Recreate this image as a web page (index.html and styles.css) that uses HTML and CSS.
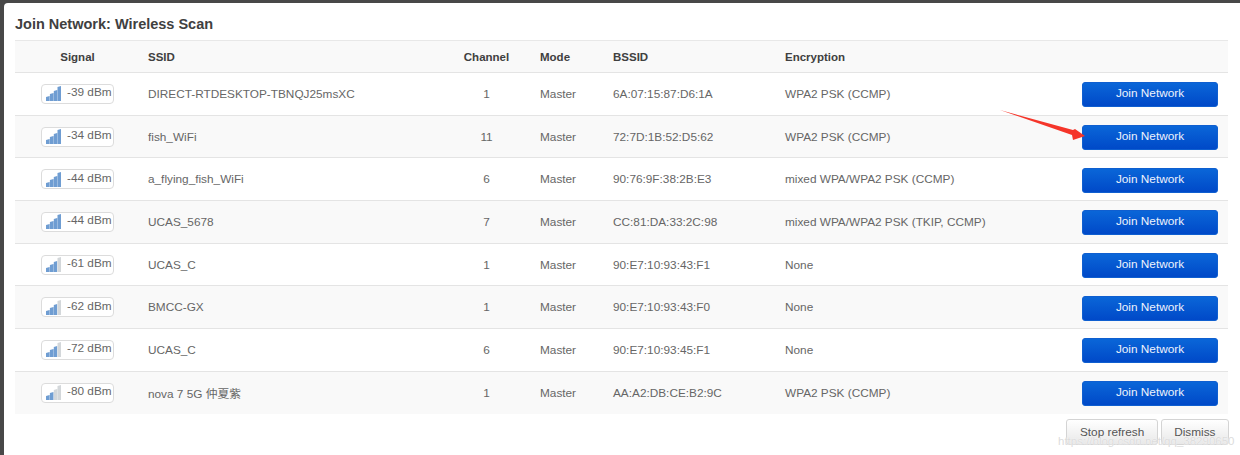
FILE: index.html
```html
<!DOCTYPE html>
<html lang="en">
<head>
    <meta charset="UTF-8">
    <title>Join Network: Wireless Scan</title>
    <link rel="stylesheet" href="styles.css">
</head>
<body>
    <svg width="0" height="0" class="defs">
        <symbol id="sig-4" viewBox="0 0 15 15">
            <path fill="#6f9dd2" d="M0 15v-4l3.600-1V15zM3.900 15V8l3.600-1V15zM7.800 15V5l3.400-1v11zM11.500 15V1L15 0v15z"/>
        </symbol>
        <symbol id="sig-3" viewBox="0 0 15 15">
            <path fill="#6f9dd2" d="M0 15v-4l3.600-1V15zM3.900 15V8l3.600-1V15zM7.800 15V5l3.400-1v11z"/>
            <path fill="#d3d7da" d="M11.500 15V1L15 0v15z"/>
        </symbol>
        <symbol id="sig-2" viewBox="0 0 15 15">
            <path fill="#6f9dd2" d="M0 15v-4l3.600-1V15zM3.900 15V8l3.600-1V15z"/>
            <path fill="#d3d7da" d="M7.800 15V5l3.400-1v11zM11.500 15V1L15 0v15z"/>
        </symbol>
    </svg>
    <div class="modal">
        <h2>Join Network: Wireless Scan</h2>
        <table class="scan">
            <thead>
                <tr>
                    <th class="col-signal center">Signal</th>
                    <th class="col-ssid">SSID</th>
                    <th class="col-channel center">Channel</th>
                    <th class="col-mode">Mode</th>
                    <th class="col-bssid">BSSID</th>
                    <th class="col-enc">Encryption</th>
                    <th class="col-action"></th>
                </tr>
            </thead>
            <tbody>
                <tr>
                    <td class="center"><span class="badge"><svg class="sig"><use href="#sig-4"/></svg>-39 dBm</span></td>
                    <td>DIRECT-RTDESKTOP-TBNQJ25msXC</td>
                    <td class="center">1</td>
                    <td>Master</td>
                    <td>6A:07:15:87:D6:1A</td>
                    <td>WPA2 PSK (CCMP)</td>
                    <td><button class="btn-join">Join Network</button></td>
                </tr>
                <tr>
                    <td class="center"><span class="badge"><svg class="sig"><use href="#sig-4"/></svg>-34 dBm</span></td>
                    <td>fish_WiFi</td>
                    <td class="center">11</td>
                    <td>Master</td>
                    <td>72:7D:1B:52:D5:62</td>
                    <td>WPA2 PSK (CCMP)</td>
                    <td><button class="btn-join">Join Network</button></td>
                </tr>
                <tr>
                    <td class="center"><span class="badge"><svg class="sig"><use href="#sig-4"/></svg>-44 dBm</span></td>
                    <td>a_flying_fish_WiFi</td>
                    <td class="center">6</td>
                    <td>Master</td>
                    <td>90:76:9F:38:2B:E3</td>
                    <td>mixed WPA/WPA2 PSK (CCMP)</td>
                    <td><button class="btn-join">Join Network</button></td>
                </tr>
                <tr>
                    <td class="center"><span class="badge"><svg class="sig"><use href="#sig-4"/></svg>-44 dBm</span></td>
                    <td>UCAS_5678</td>
                    <td class="center">7</td>
                    <td>Master</td>
                    <td>CC:81:DA:33:2C:98</td>
                    <td>mixed WPA/WPA2 PSK (TKIP, CCMP)</td>
                    <td><button class="btn-join">Join Network</button></td>
                </tr>
                <tr>
                    <td class="center"><span class="badge"><svg class="sig"><use href="#sig-3"/></svg>-61 dBm</span></td>
                    <td>UCAS_C</td>
                    <td class="center">1</td>
                    <td>Master</td>
                    <td>90:E7:10:93:43:F1</td>
                    <td>None</td>
                    <td><button class="btn-join">Join Network</button></td>
                </tr>
                <tr>
                    <td class="center"><span class="badge"><svg class="sig"><use href="#sig-3"/></svg>-62 dBm</span></td>
                    <td>BMCC-GX</td>
                    <td class="center">1</td>
                    <td>Master</td>
                    <td>90:E7:10:93:43:F0</td>
                    <td>None</td>
                    <td><button class="btn-join">Join Network</button></td>
                </tr>
                <tr>
                    <td class="center"><span class="badge"><svg class="sig"><use href="#sig-3"/></svg>-72 dBm</span></td>
                    <td>UCAS_C</td>
                    <td class="center">6</td>
                    <td>Master</td>
                    <td>90:E7:10:93:45:F1</td>
                    <td>None</td>
                    <td><button class="btn-join">Join Network</button></td>
                </tr>
                <tr>
                    <td class="center"><span class="badge"><svg class="sig"><use href="#sig-2"/></svg>-80 dBm</span></td>
                    <td>nova 7 5G 仲夏紫</td>
                    <td class="center">1</td>
                    <td>Master</td>
                    <td>AA:A2:DB:CE:B2:9C</td>
                    <td>WPA2 PSK (CCMP)</td>
                    <td><button class="btn-join">Join Network</button></td>
                </tr>
            </tbody>
        </table>
        <div class="actions">
            <button class="btn">Stop refresh</button>
            <button class="btn">Dismiss</button>
        </div>
    </div>
    <svg class="arrow" width="90" height="36" viewBox="0 0 90 36">
        <path fill="#f5352a" d="M0 0L73 20L75 19L85 26L73 30L72 25z"/>
    </svg>
    <div class="watermark">https://blog.csdn.net/qq_38290650</div>
</body>
</html>
```

FILE: styles.css
```css
html, body {
    height: 100%;
}
body {
    margin: 0;
    padding: 3px 0 0 4px;
    box-sizing: border-box;
    overflow: hidden;
    background: #484848;
    font-family: "Liberation Sans", "Noto Sans CJK SC", sans-serif;
    font-size: 11.800px;
    color: #666;
}
.defs {
    position: absolute;
}
.modal {
    height: 100%;
    box-sizing: border-box;
    padding: 0 12px 0 11px;
    background: #fff;
    border-radius: 4px 0 0 0;
}
h2 {
    margin: 0;
    padding-top: 13px;
    height: 37px;
    box-sizing: border-box;
    font-size: 14.500px;
    line-height: 16px;
    color: #404040;
}
.scan {
    width: 1213px;
    table-layout: fixed;
    border-collapse: collapse;
}
.scan th {
    height: 32px;
    padding: 0 8px;
    box-sizing: border-box;
    text-align: left;
    font-size: 11.500px;
    color: #404040;
    background: #f9f9f9;
    border-top: 1px solid #e8e8e8;
}
.scan td {
    height: 42.700px;
    padding: 0 8px;
    box-sizing: border-box;
    border-top: 1px solid #e4e4e4;
    white-space: nowrap;
}
.scan tbody tr:nth-child(even) td {
    background: #f9f9f9;
}
.scan .center {
    text-align: center;
}
.col-signal { width: 125px; }
.col-ssid { width: 301px; }
.col-channel { width: 91px; }
.col-mode { width: 73px; }
.col-bssid { width: 172px; }
.col-enc { width: 297px; }
.badge {
    display: inline-flex;
    align-items: center;
    width: 73px;
    height: 20px;
    box-sizing: border-box;
    padding: 0 0 3px 4px;
    vertical-align: middle;
    background: #fff;
    border: 1px solid #dcdcdc;
    border-radius: 4px;
}
.sig {
    width: 15px;
    height: 15px;
    margin: 3px 6px 0 0;
    flex: none;
}
.btn-join {
    display: block;
    width: 136px;
    height: 25px;
    margin-top: 2px;
    padding: 0 0 3px;
    font: inherit;
    color: #eef3fc;
    background: linear-gradient(#0a66d8, #0049c8);
    border: 1px solid #0f5fd0;
    border-radius: 3px;
}
.actions {
    display: flex;
    justify-content: flex-end;
    gap: 3px;
    margin: 5px -1px 0 0;
}
.btn {
    height: 26px;
    padding: 0 12.500px 1px;
    font: inherit;
    color: #555;
    background: linear-gradient(#fff, #e8e8e8);
    border: 1px solid #d4d4d4;
    border-radius: 3px;
}
.arrow {
    position: absolute;
    left: 1000px;
    top: 110px;
}
.watermark {
    position: absolute;
    left: 1058px;
    top: 435px;
    font-size: 11.500px;
    white-space: nowrap;
    color: #dcdcdc;
    text-shadow: 0 0 1px #fff;
}
```
